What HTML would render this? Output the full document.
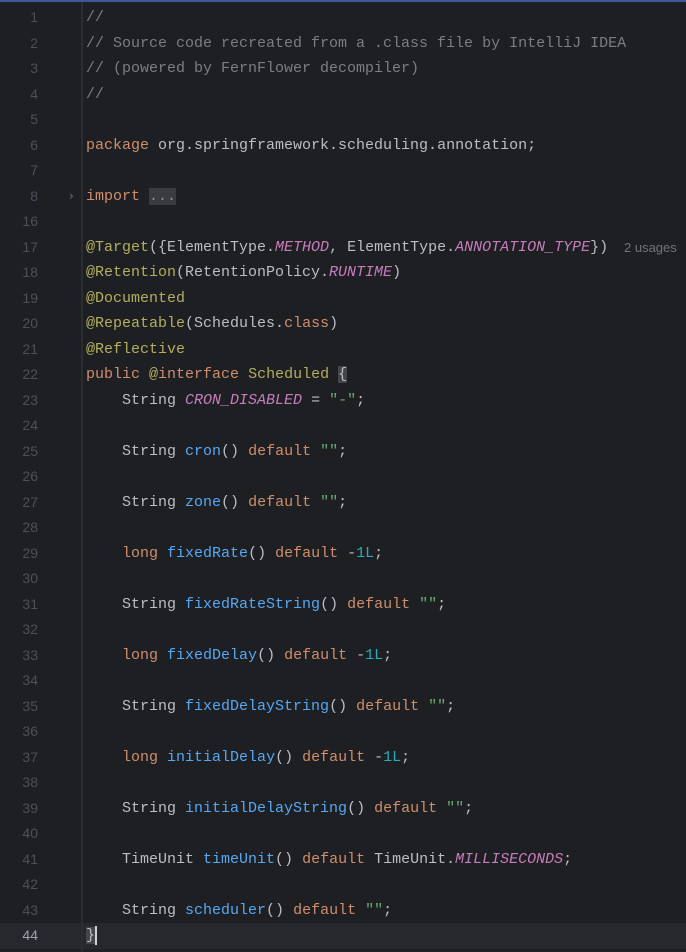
<!DOCTYPE html>
<html><head><meta charset="utf-8"><style>
html,body{margin:0;padding:0;width:686px;height:952px;background:#1e1f22;overflow:hidden}
body{position:relative;font-family:"Liberation Mono","DejaVu Sans Mono",monospace;font-size:15px;color:#bcbec4}
.top{position:absolute;left:0;top:0;width:686px;height:2px;background:#3b5998}
.gl{position:absolute;left:81px;top:2px;width:2px;height:950px;background:#2b2d30}
.row{position:absolute;left:0;width:686px;height:25.5px;line-height:25.5px;white-space:pre}
.n{position:absolute;right:648px;color:#4b5059;text-align:right;font-family:"Liberation Sans",sans-serif;font-size:14px}
.c{position:absolute;left:86px}
.cur{background:#26282e}
.cur .n{color:#a1a3ab}
.cm{color:#7a7e85}.k{color:#cf8e6d}.a{color:#b3ae60}.i{color:#c77dbb;font-style:italic}.m{color:#56a8f5}.s{color:#6aab73}.d{color:#2aacb8}
.fold{background:#393b40;color:#8c8f96}
.br{background:#43454a}
.hint{position:absolute;left:624px;color:#6f737a;font-family:"Liberation Sans",sans-serif;font-size:13px}
.arrow{position:absolute;left:69px;color:#6f737a;font-family:"DejaVu Sans",sans-serif;font-size:12px}
.caret{display:inline-block;width:2px;height:19px;background:#ced0d6;vertical-align:middle}
</style></head><body>
<div class="top"></div>
<div class="row" style="top:5px"><span class="n">1</span><span class="c cm">//</span></div>
<div class="row" style="top:30.5px"><span class="n">2</span><span class="c cm">// Source code recreated from a .class file by IntelliJ IDEA</span></div>
<div class="row" style="top:56px"><span class="n">3</span><span class="c cm">// (powered by FernFlower decompiler)</span></div>
<div class="row" style="top:81.5px"><span class="n">4</span><span class="c cm">//</span></div>
<div class="row" style="top:107px"><span class="n">5</span></div>
<div class="row" style="top:132.5px"><span class="n">6</span><span class="c"><span class="k">package</span> org.springframework.scheduling.annotation;</span></div>
<div class="row" style="top:158px"><span class="n">7</span></div>
<div class="row" style="top:183.5px"><span class="n">8</span><span class="arrow">›</span><span class="c"><span class="k">import</span> <span class="fold">...</span></span></div>
<div class="row" style="top:209px"><span class="n">16</span></div>
<div class="row" style="top:234.5px"><span class="n">17</span><span class="c"><span class="a">@Target</span>({ElementType.<span class="i">METHOD</span>, ElementType.<span class="i">ANNOTATION_TYPE</span>})</span><span class="hint">2 usages</span></div>
<div class="row" style="top:260px"><span class="n">18</span><span class="c"><span class="a">@Retention</span>(RetentionPolicy.<span class="i">RUNTIME</span>)</span></div>
<div class="row" style="top:285.5px"><span class="n">19</span><span class="c a">@Documented</span></div>
<div class="row" style="top:311px"><span class="n">20</span><span class="c"><span class="a">@Repeatable</span>(Schedules.<span class="k">class</span>)</span></div>
<div class="row" style="top:336.5px"><span class="n">21</span><span class="c a">@Reflective</span></div>
<div class="row" style="top:362px"><span class="n">22</span><span class="c"><span class="k">public</span> <span class="a">@</span><span class="k">interface</span> <span class="a">Scheduled</span> <span class="br">{</span></span></div>
<div class="row" style="top:387.5px"><span class="n">23</span><span class="c">    String <span class="i">CRON_DISABLED</span> = <span class="s">"-"</span>;</span></div>
<div class="row" style="top:413px"><span class="n">24</span></div>
<div class="row" style="top:438.5px"><span class="n">25</span><span class="c">    String <span class="m">cron</span>() <span class="k">default</span> <span class="s">""</span>;</span></div>
<div class="row" style="top:464px"><span class="n">26</span></div>
<div class="row" style="top:489.5px"><span class="n">27</span><span class="c">    String <span class="m">zone</span>() <span class="k">default</span> <span class="s">""</span>;</span></div>
<div class="row" style="top:515px"><span class="n">28</span></div>
<div class="row" style="top:540.5px"><span class="n">29</span><span class="c">    <span class="k">long</span> <span class="m">fixedRate</span>() <span class="k">default</span> -<span class="d">1L</span>;</span></div>
<div class="row" style="top:566px"><span class="n">30</span></div>
<div class="row" style="top:591.5px"><span class="n">31</span><span class="c">    String <span class="m">fixedRateString</span>() <span class="k">default</span> <span class="s">""</span>;</span></div>
<div class="row" style="top:617px"><span class="n">32</span></div>
<div class="row" style="top:642.5px"><span class="n">33</span><span class="c">    <span class="k">long</span> <span class="m">fixedDelay</span>() <span class="k">default</span> -<span class="d">1L</span>;</span></div>
<div class="row" style="top:668px"><span class="n">34</span></div>
<div class="row" style="top:693.5px"><span class="n">35</span><span class="c">    String <span class="m">fixedDelayString</span>() <span class="k">default</span> <span class="s">""</span>;</span></div>
<div class="row" style="top:719px"><span class="n">36</span></div>
<div class="row" style="top:744.5px"><span class="n">37</span><span class="c">    <span class="k">long</span> <span class="m">initialDelay</span>() <span class="k">default</span> -<span class="d">1L</span>;</span></div>
<div class="row" style="top:770px"><span class="n">38</span></div>
<div class="row" style="top:795.5px"><span class="n">39</span><span class="c">    String <span class="m">initialDelayString</span>() <span class="k">default</span> <span class="s">""</span>;</span></div>
<div class="row" style="top:821px"><span class="n">40</span></div>
<div class="row" style="top:846.5px"><span class="n">41</span><span class="c">    TimeUnit <span class="m">timeUnit</span>() <span class="k">default</span> TimeUnit.<span class="i">MILLISECONDS</span>;</span></div>
<div class="row" style="top:872px"><span class="n">42</span></div>
<div class="row" style="top:897.5px"><span class="n">43</span><span class="c">    String <span class="m">scheduler</span>() <span class="k">default</span> <span class="s">""</span>;</span></div>
<div class="row cur" style="top:923px"><span class="n">44</span><span class="c"><span class="br">}</span><span class="caret"></span></span></div>
<div class="gl"></div>
</body></html>
